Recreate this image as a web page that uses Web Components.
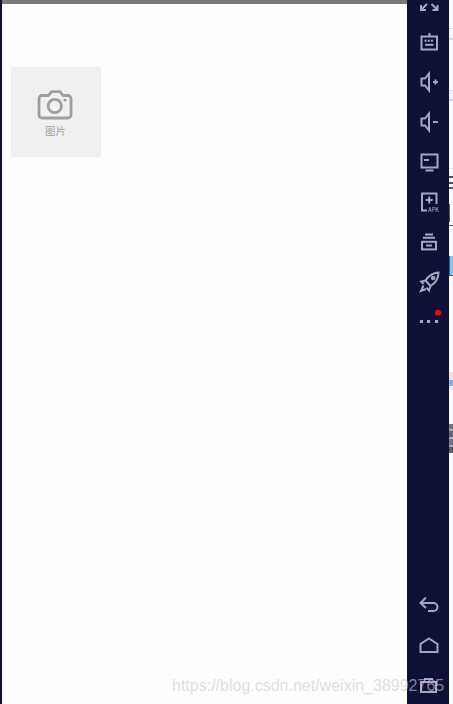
<!DOCTYPE html>
<html>
<head>
<meta charset="utf-8">
<title>emulator</title>
<style>
	html, body { margin: 0; height: 100%; overflow: hidden; background: #fff; }
</style>
</head>
<body>
<phone-frame>
	<screen-view slot="screen">
		<image-tile label="图片"></image-tile>
	</screen-view>
	<side-rail slot="rail">
		<rail-button icon="fullscreen"></rail-button>
		<rail-button icon="keyboard"></rail-button>
		<rail-button icon="volup"></rail-button>
		<rail-button icon="voldown"></rail-button>
		<rail-button icon="display"></rail-button>
		<rail-button icon="apk"></rail-button>
		<rail-button icon="stack"></rail-button>
		<rail-button icon="rocket"></rail-button>
		<rail-button icon="more"></rail-button>
		<rail-button slot="nav" icon="back"></rail-button>
		<rail-button slot="nav" icon="home"></rail-button>
		<rail-button slot="nav" icon="recent"></rail-button>
	</side-rail>
	<edge-strip slot="edge"></edge-strip>
</phone-frame>
<water-mark>https://blog.csdn.net/weixin_38992765</water-mark>

<script>
const templateFrame = document.createElement('template');
templateFrame.innerHTML = `
	<style>
		:host {
			display: grid;
			grid-template-columns: 2px 405px 42px 4px;
			height: 704px;
			width: 453px;
			overflow: hidden;
		}
		.left { background: #0f1035; }
	</style>
	<div class="left"></div>
	<slot name="screen"></slot>
	<slot name="rail"></slot>
	<slot name="edge"></slot>
	`;

class PhoneFrame extends HTMLElement {
	constructor(){
		super();
		this.attachShadow({ mode: 'open' });
		this.shadowRoot.appendChild(templateFrame.content.cloneNode(true));
	}
}
customElements.define('phone-frame', PhoneFrame);

const templateScreen = document.createElement('template');
templateScreen.innerHTML = `
	<style>
		:host {
			display: flex;
			flex-direction: column;
			background: #fefefe;
			height: 704px;
		}
		.status { height: 4px; background: #7b7b7b; }
		.content { padding: 63px 9px 0; }
	</style>
	<div class="status"></div>
	<div class="content"><slot></slot></div>
	`;

class ScreenView extends HTMLElement {
	constructor(){
		super();
		this.attachShadow({ mode: 'open' });
		this.shadowRoot.appendChild(templateScreen.content.cloneNode(true));
	}
}
customElements.define('screen-view', ScreenView);

const templateTile = document.createElement('template');
templateTile.innerHTML = `
	<style>
		:host {
			display: flex;
			flex-direction: column;
			align-items: center;
			width: 90px;
			height: 90px;
			box-sizing: border-box;
			padding: 23px 1px 0 0;
			background: #f0f0f0;
			color: #a4a4a4;
			font-family: "Noto Sans CJK SC", "Noto Sans", sans-serif;
			font-size: 10.5px;
			line-height: 14px;
		}
		svg { display: block; width: 36px; height: 30px; margin-right: 1px; }
		.txt { margin-top: 4px; }
	</style>
	<svg viewBox="0 0 36 30" fill="none" stroke="#9e9e9e" stroke-width="2.8" stroke-linejoin="round">
		<path d="M5 5.5H11.5L14.5 1.6H23L26 5.5H31a3 3 0 0 1 3 3V25a3 3 0 0 1-3 3H5a3 3 0 0 1-3-3V8.5a3 3 0 0 1 3-3Z"/>
		<circle cx="17.8" cy="16" r="6.6"/>
		<circle cx="28" cy="10" r="1.6" fill="#9e9e9e" stroke="none"/>
	</svg>
	<span class="txt"></span>
	`;

class ImageTile extends HTMLElement {
	constructor(){
		super();
		this.attachShadow({ mode: 'open' });
		this.shadowRoot.appendChild(templateTile.content.cloneNode(true));
		this.shadowRoot.querySelector('.txt').textContent = this.getAttribute('label');
	}
}
customElements.define('image-tile', ImageTile);

const templateRail = document.createElement('template');
templateRail.innerHTML = `
	<style>
		:host {
			display: flex;
			flex-direction: column;
			justify-content: space-between;
			height: 704px;
			background: #0f1035;
			overflow: hidden;
		}
		.top { display: flex; flex-direction: column; margin-top: -18px; }
		.nav { display: flex; flex-direction: column; margin-bottom: -1px; }
	</style>
	<div class="top"><slot></slot></div>
	<div class="nav"><slot name="nav"></slot></div>
	`;

class SideRail extends HTMLElement {
	constructor(){
		super();
		this.attachShadow({ mode: 'open' });
		this.shadowRoot.appendChild(templateRail.content.cloneNode(true));
	}
}
customElements.define('side-rail', SideRail);

// drawn on a 24 box, centred in a 40px row of the rail
const railIcons = {
	fullscreen: `<path d="M5 15v5h5M5 20l6-6M21.5 15v5h-5M21.5 20l-6-6"/>`,
	keyboard: `<rect x="5.5" y="6.5" width="15.5" height="13"/><path d="M13.5 3v3.5"/><path d="M8.5 10.8h9.5" stroke-dasharray="2 1.2"/><path d="M9 14.8h8.5"/>`,
	volup: `<path d="M5.5 8.5H9L13 3.5V20.5L9 15.5H5.5ZM17 12h5M19.5 9.5v5"/>`,
	voldown: `<path d="M5.5 8.5H9L13 3.5V20.5L9 15.5H5.5ZM17 12h5"/>`,
	display: `<rect x="5.5" y="4.5" width="16" height="13"/><path d="M8 10h5M9.5 20.5h8"/>`,
	apk: `<path d="M11 20.5H6V3.5H20.5V14M13.2 6.5v7M9.7 10h7"/><text x="12" y="21.6" font-family="Liberation Mono, monospace" font-size="7" textLength="11" lengthAdjust="spacingAndGlyphs" fill="#a6a6c2" stroke="none">APK</text>`,
	stack: `<path d="M9 4.5h8M7 7.8h12M10 15.5h6"/><rect x="6" y="11.8" width="14" height="7.6"/>`,
	rocket: `<path d="M22.5 2.5c-5 .5-9.5 2.5-13 8l5 5.5c5-3 8-8 8-13.5Z"/><circle cx="17.2" cy="8" r="1.3"/><path d="M9.5 10.5 5.2 11.5 7.6 14M14.5 16 13 20.5 10.6 17.6M7.5 15.5 5 21l5-2"/>`,
	more: `<path d="M4 11.5h3M11 11.5h3M19 11.5h3" stroke-width="3"/><circle cx="22" cy="2.7" r="3" fill="#ee0a1e" stroke="none"/>`,
	back: `<path d="M10 5.5 4.5 11 10 16M4.5 11H17.5a4 4 0 0 1 0 8H12" transform="translate(0 -1)"/>`,
	home: `<path d="M13 5.5 21.5 11V19H4.5V11Z"/>`,
	recent: `<rect x="5" y="9" width="15" height="10"/><path d="M8 6h9"/>`
};

class RailButton extends HTMLElement {
	constructor(){
		super();
		this.attachShadow({ mode: 'open' });
		this.shadowRoot.innerHTML = `
			<style>
				:host { display: flex; align-items: center; justify-content: center; height: 40px; }
				svg { display: block; width: 24px; height: 24px; overflow: visible; }
			</style>
			<svg viewBox="0 0 24 24" fill="none" stroke="#a6a6c2" stroke-width="2">${railIcons[this.getAttribute('icon')]}</svg>
		`;
	}
}
customElements.define('rail-button', RailButton);

// scraps of the desktop window behind the emulator, top to bottom: height, fill, left edge colour
const edgeBits = [
	[28], [1, '#dcdce8'], [9, '#f5f5fa'], [2, '#d8d8e6'],
	[50], [1, '#d8d8e6'], [8, '#f5f5fa'], [2, '#d8d8e6'],
	[67], [1, '#e2e2e2'], [7], [2, '#4a4f60'], [4], [2, '#4a4f60'], [3], [2, '#555a6a'],
	[15], [18, '#fdfdfd', '#555a6a'], [3], [1, '#555a6a'],
	[30], [19, '#8cc4ec', '#555a6a'], [1, '#7a4a4a'],
	[96], [8, '#f4e4da'], [6, '#8fadd0'], [4, '#e8eef4'],
	[34], [5, '#77777c'], [2, '#a8a8ac'], [6, '#66666b'], [2, '#b0b0b4'], [6, '#77777c'], [2, '#a8a8ac'], [6, '#5e5e63'],
	[251]
];

class EdgeStrip extends HTMLElement {
	constructor(){
		super();
		this.attachShadow({ mode: 'open' });
		this.shadowRoot.innerHTML = `
			<style>
				:host { display: block; height: 704px; overflow: hidden; background: #fdfdfd; }
				div { box-sizing: border-box; }
			</style>
			${edgeBits.map(b => `<div style="height:${b[0]}px;background:${b[1] || 'none'};border-left:${b[2] ? '1.5px solid ' + b[2] : '0'}"></div>`).join('')}
		`;
	}
}
customElements.define('edge-strip', EdgeStrip);

const templateMark = document.createElement('template');
templateMark.innerHTML = `
	<style>
		:host {
			position: absolute;
			left: 172px;
			top: 676px;
			font-family: "Liberation Sans", Arial, sans-serif;
			font-size: 16px;
			line-height: 20px;
			color: rgba(205, 205, 205, .62);
			white-space: nowrap;
		}
	</style>
	<slot></slot>
	`;

class WaterMark extends HTMLElement {
	constructor(){
		super();
		this.attachShadow({ mode: 'open' });
		this.shadowRoot.appendChild(templateMark.content.cloneNode(true));
	}
}
customElements.define('water-mark', WaterMark);
</script>
</body>
</html>
